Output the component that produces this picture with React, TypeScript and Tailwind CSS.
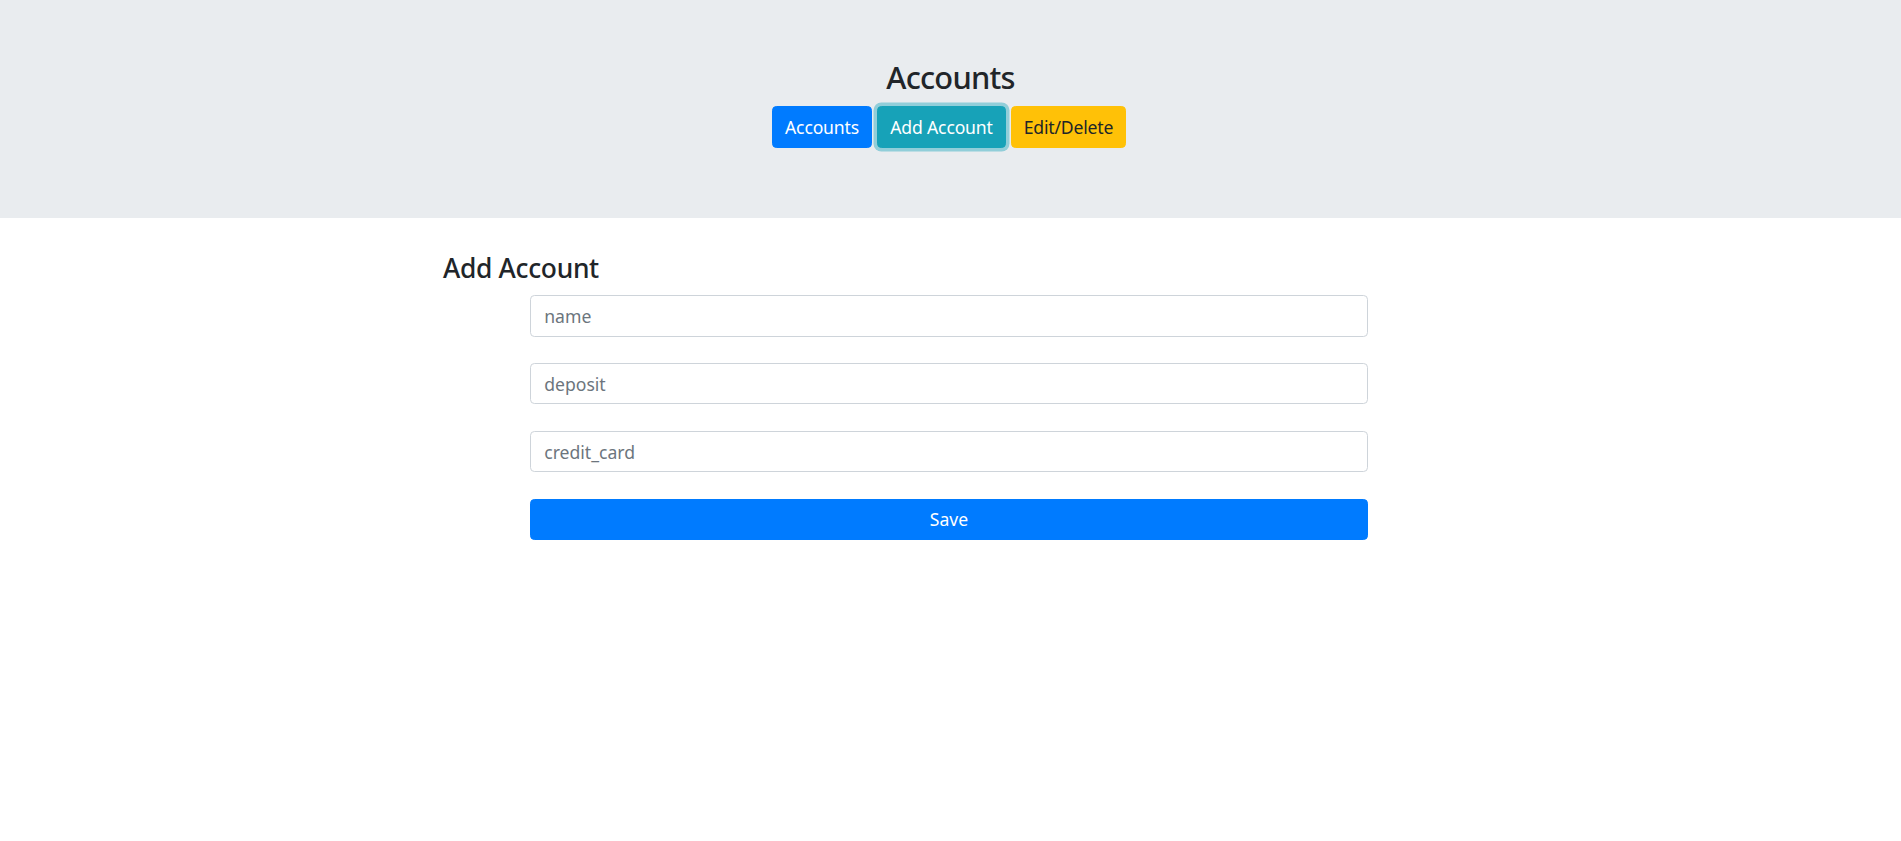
import React from "react";

const fields = ["name", "deposit", "credit_card"];

export default function App() {
  return (
    <div className="min-h-screen bg-white text-[#212529] font-['Segoe_UI','Noto_Sans',sans-serif] text-[17.6px] leading-normal">
      {/* Jumbotron */}
      <div className="bg-[#e9ecef] h-[218px] pt-[59px] flex flex-col items-center">
        <h3 className="text-[30.8px] font-medium leading-[37px] h-[37px] mb-[10px] tracking-[-0.025em]">Accounts</h3>
        <div className="flex gap-[5px] pr-[3px]">
          <button className="w-[100px] h-[42px] rounded-[4.4px] border border-[#007bff] bg-[#007bff] text-white tracking-[-0.01em]">
            Accounts
          </button>
          <button className="w-[129px] h-[42px] rounded-[4.4px] border border-[#17a2b8] bg-[#17a2b8] text-white tracking-[-0.01em] shadow-[0_0_0_3.5px_rgba(58,176,195,0.5)]">
            Add Account
          </button>
          <button className="w-[115px] h-[42px] rounded-[4.4px] border border-[#ffc107] bg-[#ffc107] text-[#212529] tracking-[-0.01em]">
            Edit/Delete
          </button>
        </div>
      </div>

      {/* Form */}
      <div className="w-[1056px] mx-auto px-[16.5px] pt-[35px]">
        <h4 className="text-[26.4px] font-medium leading-[31.7px] mb-[10px] pl-[4px] tracking-[-0.012em]">Add Account</h4>
        <form className="ml-[91px] w-[838px] flex flex-col gap-[26.2px]" onSubmit={(e) => e.preventDefault()}>
          {fields.map((f) => (
            <input
              key={f}
              placeholder={f}
              className="h-[41.8px] w-full px-[13.2px] py-[6.6px] border border-[#ced4da] rounded-[4.4px] text-[#495057] placeholder-[#6c757d] focus:outline-none"
            />
          ))}
          <button
            type="submit"
            className="h-[41.8px] w-full rounded-[4.4px] border border-[#007bff] bg-[#007bff] text-white"
          >
            Save
          </button>
        </form>
      </div>
    </div>
  );
}
